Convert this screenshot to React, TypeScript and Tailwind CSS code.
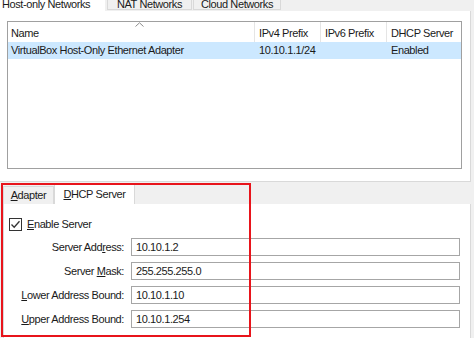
import React from 'react';

const font = { fontFamily: '"Liberation Sans", Arial, sans-serif' };

function Field({ label, hot, value }: { label: string; hot: number; value: string }) {
  return (
    <div className="flex items-center h-[18px]">
      <div className="w-[124px] text-right pr-[4px] text-[11px] text-[#1a1a1a] whitespace-nowrap">
        {label.slice(0, hot)}
        <span className="underline">{label[hot]}</span>
        {label.slice(hot + 1)}
      </div>
      <div className="ml-[3px] w-[329px] h-[18px] border border-[#a6a6a6] bg-white flex items-center pl-[4px] text-[11px] text-[#1a1a1a]">
        {value}
      </div>
    </div>
  );
}

export default function App() {
  return (
    <div className="relative w-[474px] h-[338px] overflow-hidden bg-[#f0f0f0] text-[#1a1a1a] tracking-[-0.4px]" style={font}>
      {/* top tab strip, partially off-screen */}
      <div className="flex h-[12px] -mt-[1px] text-[11px] leading-[11px]">
        <div className="w-[105px] bg-white pl-[2px] z-10">Host-only Networks</div>
        <div className="ml-[2px] w-[85px] h-[11px] bg-[#f0f0f0] border border-t-0 border-[#d9d9d9] text-center">NAT Networks</div>
        <div className="ml-[1px] w-[88px] h-[11px] bg-[#f0f0f0] border border-t-0 border-[#d9d9d9] text-center">Cloud Networks</div>
      </div>

      {/* upper tab page */}
      <div className="w-[471px] h-[171px] bg-white border-r border-b border-[#d9d9d9] pt-[10px] pl-[7px]">
        <div className="w-[455px] h-[148px] border border-[#a0a0a0] text-[11px]">
          <div className="relative flex h-[20px] items-center">
            <div className="w-[246px] pl-[3px] pt-[3px]">Name</div>
            <div className="w-[66px] h-full flex items-center pt-[3px] pl-[4px] border-l border-[#e5e5e5]">IPv4 Prefix</div>
            <div className="w-[66px] h-full flex items-center pt-[3px] pl-[4px] border-l border-[#e5e5e5]">IPv6 Prefix</div>
            <div className="flex-1 h-full flex items-center pt-[3px] pl-[4px] border-l border-[#e5e5e5]">DHCP Server</div>
            <svg className="absolute left-[127px] top-[0px]" width="9" height="5" viewBox="0 0 9 5">
              <path d="M0.5 4.5 L4.5 0.8 L8.5 4.5" fill="none" stroke="#8c8c8c" strokeWidth="1" />
            </svg>
          </div>
          <div className="flex h-[17px] items-center bg-[#cce8ff]">
            <div className="w-[246px] pl-[3px] whitespace-nowrap">VirtualBox Host-Only Ethernet Adapter</div>
            <div className="w-[66px] pl-[5px]">10.10.1.1/24</div>
            <div className="w-[66px] pl-[5px]"></div>
            <div className="flex-1 pl-[5px]">Enabled</div>
          </div>
        </div>
      </div>

      {/* lower tabs */}
      <div className="mt-[2px] ml-[3px] flex h-[20px] text-[11px] items-end">
        <div className="w-[51px] h-[18px] bg-[#f0f0f0] border border-b-0 border-[#d9d9d9] flex items-center justify-center">
          <span><span className="underline">A</span>dapter</span>
        </div>
        <div className="w-[81px] h-[20px] bg-white border border-b-0 border-[#d9d9d9] flex items-center justify-center">
          <span><span className="underline">D</span>HCP Server</span>
        </div>
      </div>

      {/* lower tab page */}
      <div className="ml-[3px] w-[468px] h-[140px] bg-white border-l border-r border-[#d9d9d9] pt-[14px] pl-[5px]">
        <div className="flex items-center gap-[5px] h-[13px] text-[11px]">
          <div className="w-[13px] h-[13px] border border-[#333] bg-white flex items-center justify-center">
            <svg width="11" height="11" viewBox="0 0 11 11">
              <path d="M1.5 5.5 L4.2 8.3 L9.5 2.2" fill="none" stroke="#333" strokeWidth="1.3" />
            </svg>
          </div>
          <span><span className="underline">E</span>nable Server</span>
        </div>
        <div className="mt-[7px] flex flex-col gap-[6px] -ml-[5px]">
          <Field label="Server Address:" hot={10} value="10.10.1.2" />
          <Field label="Server Mask:" hot={7} value="255.255.255.0" />
          <Field label="Lower Address Bound:" hot={0} value="10.10.1.10" />
          <Field label="Upper Address Bound:" hot={0} value="10.10.1.254" />
        </div>
      </div>

      {/* red annotation */}
      <div className="absolute left-[1px] top-[183px] w-[250px] h-[154px] border-[2px] border-[#e8141b] pointer-events-none" />
    </div>
  );
}
